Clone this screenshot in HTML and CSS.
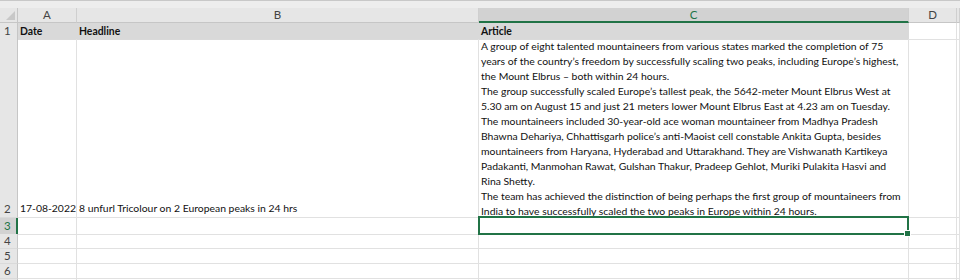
FILE: index.html
```html
<!DOCTYPE html>
<html lang="en">
<head>
    <meta charset="UTF-8">
    <title>Sheet1</title>
    <link rel="stylesheet" href="styles.css">
</head>
<body>
    <div class="topbar"></div>
    <div class="sheet">
        <!-- column headers -->
        <div class="row hdr">
            <div class="rh corner"><span class="tri"></span></div>
            <div class="c ca ch">A</div>
            <div class="c cb ch">B</div>
            <div class="c cc ch sel">C</div>
            <div class="c cd ch">D</div>
            <div class="c ce ch"></div>
        </div>

        <div class="row r1">
            <div class="rh">1</div>
            <div class="c ca fill b">Date</div>
            <div class="c cb fill b">Headline</div>
            <div class="c cc fill b">Article</div>
            <div class="c cd"></div>
            <div class="c ce"></div>
        </div>

        <div class="row r2">
            <div class="rh bottom">2</div>
            <div class="c ca bottom">17-08-2022</div>
            <div class="c cb bottom">8 unfurl Tricolour on 2 European peaks in 24 hrs</div>
            <div class="c cc wrap">A group of eight talented mountaineers from various states marked the completion of 75<br>
years of the country’s freedom by successfully scaling two peaks, including Europe’s highest,<br>
the Mount Elbrus – both within 24 hours.<br>
The group successfully scaled Europe’s tallest peak, the 5642-meter Mount Elbrus West at<br>
5.30 am on August 15 and just 21 meters lower Mount Elbrus East at 4.23 am on Tuesday.<br>
The mountaineers included 30-year-old ace woman mountaineer from Madhya Pradesh<br>
Bhawna Dehariya, Chhattisgarh police’s anti-Maoist cell constable Ankita Gupta, besides<br>
mountaineers from Haryana, Hyderabad and Uttarakhand. They are Vishwanath Kartikeya<br>
Padakanti, Manmohan Rawat, Gulshan Thakur, Pradeep Gehlot, Muriki Pulakita Hasvi and<br>
Rina Shetty.<br>
The team has achieved the distinction of being perhaps the first group of mountaineers from<br>
India to have successfully scaled the two peaks in Europe within 24 hours.</div>
            <div class="c cd"></div>
            <div class="c ce"></div>
        </div>

        <div class="row r3">
            <div class="rh rsel">3</div>
            <div class="c ca"></div>
            <div class="c cb"></div>
            <div class="c cc active"><span class="handle"></span></div>
            <div class="c cd"></div>
            <div class="c ce"></div>
        </div>
        <div class="row">
            <div class="rh">4</div>
            <div class="c ca"></div>
            <div class="c cb"></div>
            <div class="c cc"></div>
            <div class="c cd"></div>
            <div class="c ce"></div>
        </div>
        <div class="row">
            <div class="rh">5</div>
            <div class="c ca"></div>
            <div class="c cb"></div>
            <div class="c cc"></div>
            <div class="c cd"></div>
            <div class="c ce"></div>
        </div>
        <div class="row">
            <div class="rh">6</div>
            <div class="c ca"></div>
            <div class="c cb"></div>
            <div class="c cc"></div>
            <div class="c cd"></div>
            <div class="c ce"></div>
        </div>
        <div class="row">
            <div class="rh"></div>
            <div class="c ca"></div>
            <div class="c cb"></div>
            <div class="c cc"></div>
            <div class="c cd"></div>
            <div class="c ce"></div>
        </div>
    </div>
</body>
</html>
```
FILE: styles.css
```css
body{
    margin: 0;
    background-color: white;
    font-family: "Lato", "Liberation Sans", sans-serif;
    font-size: 10.4px;
    color: #111;
    overflow: hidden;
}

.topbar{
    height: 8px;
    background-color: #ededed;
    border-top: 1px solid #c8c8c8;
    box-sizing: border-box;
}

.row{
    display: grid;
    grid-template-columns: 18px 59px 402px 430px 48px 1fr;
    height: 15px;
    line-height: 14px;
}
.row.r1, .row.r3{
    height: 16px;
    line-height: 16px;
}

.rh{
    background-color: #e6e6e6;
    border-right: 1px solid #c6c6c6;
    border-bottom: 1px solid #dadada;
    color: #444;
    font-size: 11.5px;
    padding-left: 4px;
}
.rh.bottom{
    display: flex;
    align-items: flex-end;
    padding-bottom: 1px;
}
.rh.rsel{
    background-color: #d2d2d2;
    color: #217346;
    border-right: 2px solid #217346;
}

.c{
    border-right: 1px solid #e1e1e1;
    border-bottom: 1px solid #e1e1e1;
    padding-left: 2px;
    white-space: nowrap;
    overflow: hidden;
}

.hdr .rh.corner{
    background-color: #e6e6e6;
    border-bottom: 1px solid #c6c6c6;
    position: relative;
}
.tri{
    position: absolute;
    right: 2px;
    bottom: 2px;
    width: 0;
    height: 0;
    border-left: 9px solid transparent;
    border-bottom: 9px solid #c8c8c8;
}

.ch{
    background-color: #e6e6e6;
    border-right: 1px solid #cfcfcf;
    border-bottom: 1px solid #c6c6c6;
    color: #444;
    text-align: center;
    padding-left: 0;
    font-size: 11.5px;
}
.ch.sel{
    background-color: #d2d2d2;
    border-bottom: 2px solid #217346;
    color: #217346;
}

.fill{
    background-color: #d9d9d9;
    border-right-color: #d9d9d9;
    border-bottom-color: #dadada;
}
.b{
    font-weight: bold;
}

.r2{
    height: 179px;
    line-height: 15px;
}
.bottom{
    display: flex;
    align-items: flex-end;
    padding-bottom: 1px;
}
.wrap{
    padding-top: 0;
}

.active{
    position: relative;
    overflow: visible;
}
.active::after{
    content: "";
    position: absolute;
    left: -1px;
    top: -2px;
    right: -1px;
    bottom: -1px;
    border: 2px solid #217346;
}
.handle{
    position: absolute;
    right: -3px;
    bottom: -3px;
    width: 5px;
    height: 5px;
    background-color: #217346;
    border: 1px solid white;
    z-index: 2;
}
```
